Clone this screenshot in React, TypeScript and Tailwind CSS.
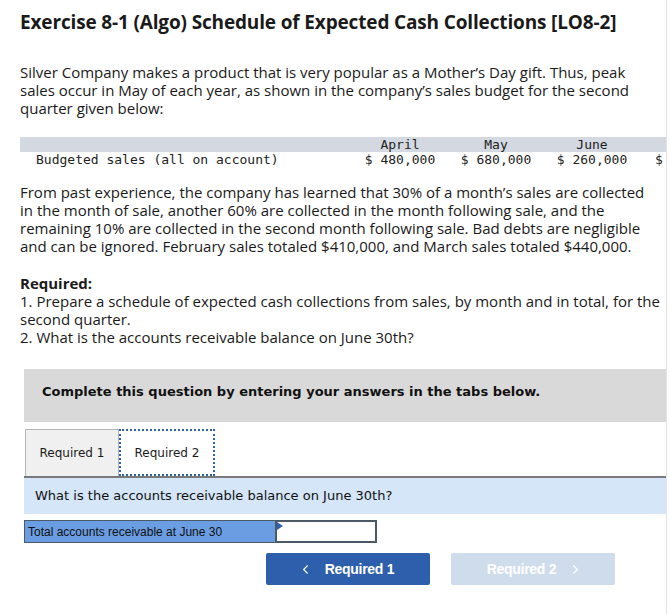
import React from 'react';
import { ChevronLeft, ChevronRight } from 'lucide-react';

const body = "font-['Open_Sans','Liberation_Sans',sans-serif]";
const mono = "font-['DejaVu_Sans_Mono','Liberation_Mono',monospace]";
const verdana = "font-['DejaVu_Sans','Liberation_Sans',sans-serif]";

const months = [
  { name: 'April', amount: '$ 480,000' },
  { name: 'May', amount: '$ 680,000' },
  { name: 'June', amount: '$ 260,000' },
];

const App: React.FC = () => {
  return (
    <div className="w-[670px] h-[614px] bg-white overflow-hidden">
      <div className="w-[667px] h-[614px] border-r border-[#e3e3e3] text-[#1a1a1a]">
        <h1 className={`${body} pl-[20px] pt-[10px] text-[19px] leading-[24px] font-bold tracking-[-0.15px]`}>
          Exercise 8-1 (Algo) Schedule of Expected Cash Collections [LO8-2]
        </h1>

        <p className={`${body} pl-[20px] pr-[12px] mt-[29px] text-[15px] leading-[18px]`}>
          Silver Company makes a product that is very popular as a Mother’s Day gift. Thus, peak
          sales occur in May of each year, as shown in the company’s sales budget for the second
          quarter given below:
        </p>

        <div className={`${mono} ml-[20px] mt-[20px] text-[13px] leading-[15px] text-[#222]`}>
          <div className="flex bg-[#d3d8e1] h-[15px]">
            <div className="w-[332px]" />
            {months.map((m) => (
              <div key={m.name} className="w-[96px] text-center">
                {m.name}
              </div>
            ))}
          </div>
          <div className="flex h-[15px]">
            <div className="w-[332px] pl-[16px]">Budgeted sales (all on account)</div>
            {months.map((m) => (
              <div key={m.name} className="w-[96px] text-center">
                {m.amount}
              </div>
            ))}
            <div className="pl-[15px]">$</div>
          </div>
        </div>

        <p className={`${body} pl-[20px] pr-[12px] mt-[16px] text-[15px] leading-[18px]`}>
          From past experience, the company has learned that 30% of a month’s sales are collected
          in the month of sale, another 60% are collected in the month following sale, and the
          remaining 10% are collected in the second month following sale. Bad debts are negligible
          and can be ignored. February sales totaled $410,000, and March sales totaled $440,000.
        </p>

        <div className={`${body} pl-[20px] pr-[6px] mt-[19px] text-[15px] leading-[18px]`}>
          <div className="font-bold">Required:</div>
          <div>
            1. Prepare a schedule of expected cash collections from sales, by month and in total, for the
            second quarter.
          </div>
          <div>2. What is the accounts receivable balance on June 30th?</div>
        </div>

        <div className="ml-[24px] mt-[23px]">
          <div className={`${verdana} bg-[#d9d9d9] h-[53px] pl-[18px] pt-[13px] text-[13px] font-bold text-[#111]`}>
            Complete this question by entering your answers in the tabs below.
          </div>

          <div className={`${verdana} flex mt-[7px] h-[49px] border-b-2 border-[#7a7a7a] text-[12px]`}>
            <div className="w-[94px] flex items-center justify-center bg-[#f0f0f0] border border-b-0 border-[#b5b5b5] ml-[1px]">
              Required 1
            </div>
            <div className="w-[96px] flex items-center justify-center bg-white border-2 border-dotted border-[#2f5fb0]">
              Required 2
            </div>
          </div>

          <div className={`${verdana} bg-[#d4e6f7] h-[36px] pl-[11px] flex items-center text-[13px] text-[#111]`}>
            What is the accounts receivable balance on June 30th?
          </div>

          <div className="flex mt-[6px] h-[23px]">
            <div className="w-[252px] bg-[#6a9de1] border border-[#4c5a68] flex items-center pl-[3px] font-['Liberation_Sans',sans-serif] text-[12px] text-[#111]">
              Total accounts receivable at June 30
            </div>
            <div className="relative w-[101px] bg-white border-2 border-l border-[#4c5a68]">
              <div className="absolute left-0 top-0 w-0 h-0 border-t-[4px] border-b-[4px] border-l-[6px] border-t-transparent border-b-transparent border-l-[#2f5fb0]" />
            </div>
          </div>

          <div className="flex mt-[10px] ml-[242px] gap-[21px] font-['Liberation_Sans',sans-serif] text-[14px] font-bold tracking-[-0.3px]">
            <button className="w-[164px] h-[32px] rounded-[2px] bg-[#2e5fac] text-white flex items-center justify-center gap-[12px] pr-[4px]">
              <ChevronLeft size={15} strokeWidth={1.75} />
              <span>Required 1</span>
            </button>
            <button className="w-[164px] h-[32px] rounded-[2px] bg-[#cfdcec] text-white flex items-center justify-center gap-[12px] pl-[4px]">
              <span>Required 2</span>
              <ChevronRight size={15} strokeWidth={1.75} />
            </button>
          </div>
        </div>
      </div>
    </div>
  );
};

export default App;
